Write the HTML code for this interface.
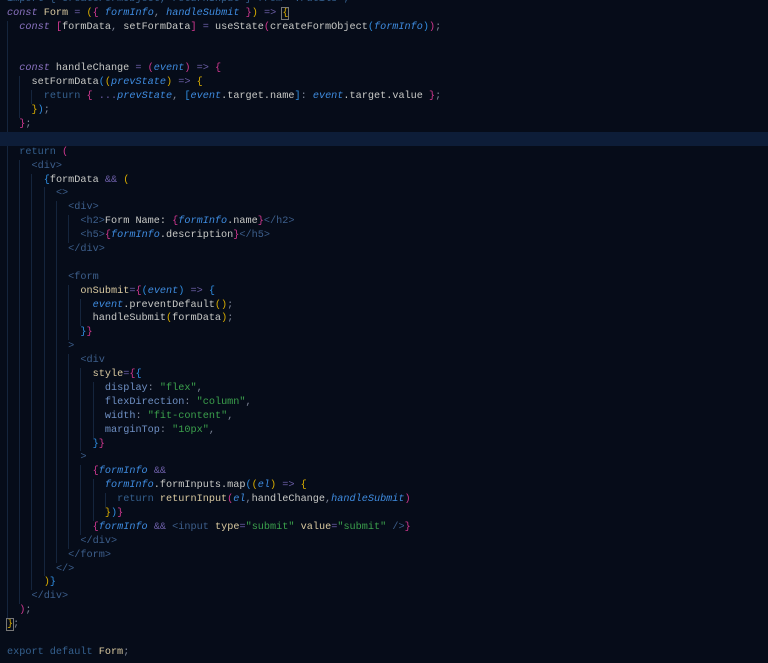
<!DOCTYPE html>
<html><head><meta charset="utf-8"><style>
html,body{margin:0;padding:0;background:#060c19;width:768px;height:663px;overflow:hidden}
#c{position:absolute;left:7px;top:-7px;font-family:"Liberation Mono","DejaVu Sans Mono",monospace;font-size:10.2px;color:#c8c9c6}
.l{height:13.9px;line-height:13.9px;position:relative;white-space:pre}
.hl{background:#0d1d38;margin-left:-7px;width:768px}
.g{display:inline-block;width:12.24px;height:13.9px;vertical-align:top;box-shadow:inset 1px 0 0 #15253d}
.k{color:#8a72c0;font-style:italic}
.r{color:#35608e}
.t{color:#3d5f8c}
.p{color:#3f8ce0;font-style:italic}
.s{color:#3ba04c}
.o{color:#6d5fa8}
.y{color:#d9ad00}
.m{color:#d03890}
.b{color:#2f8de0}
.pr{color:#6f90c4}
.u{color:#7d8596}
.f{color:#d9c9a0}
</style></head><body><div id="c">
<div class="l"><span class="r">import { createFormObject, returnInput } from "./utils";</span></div>
<div class="l"><span class="k">const</span> <span class="f">Form</span> <span class="o">=</span> <span class="y">(</span><span class="m">{</span> <span class="p">formInfo</span><span class="u">,</span> <span class="p">handleSubmit</span> <span class="m">}</span><span class="y">)</span> <span class="o">=&gt;</span> <span class="y" style="outline:1px solid #777">{</span></div>
<div class="l"><i class="g"></i><span class="k">const</span> <span class="m">[</span>formData<span class="u">,</span> setFormData<span class="m">]</span> <span class="o">=</span> useState<span class="m">(</span>createFormObject<span class="b">(</span><span class="p">formInfo</span><span class="b">)</span><span class="m">)</span><span class="u">;</span></div>
<div class="l"><i class="g"></i></div>
<div class="l"><i class="g"></i></div>
<div class="l"><i class="g"></i><span class="k">const</span> handleChange <span class="o">=</span> <span class="m">(</span><span class="p">event</span><span class="m">)</span> <span class="o">=&gt;</span> <span class="m">{</span></div>
<div class="l"><i class="g"></i><i class="g"></i>setFormData<span class="b">(</span><span class="y">(</span><span class="p">prevState</span><span class="y">)</span> <span class="o">=&gt;</span> <span class="y">{</span></div>
<div class="l"><i class="g"></i><i class="g"></i><i class="g"></i><span class="r">return</span> <span class="m">{</span> <span class="o">...</span><span class="p">prevState</span><span class="u">,</span> <span class="b">[</span><span class="p">event</span>.target.name<span class="b">]</span><span class="u">:</span> <span class="p">event</span>.target.value <span class="m">}</span><span class="u">;</span></div>
<div class="l"><i class="g"></i><i class="g"></i><span class="y">}</span><span class="b">)</span><span class="u">;</span></div>
<div class="l"><i class="g"></i><span class="m">}</span><span class="u">;</span></div>
<div class="l hl"></div>
<div class="l"><i class="g"></i><span class="r">return</span> <span class="m">(</span></div>
<div class="l"><i class="g"></i><i class="g"></i><span class="t">&lt;div&gt;</span></div>
<div class="l"><i class="g"></i><i class="g"></i><i class="g"></i><span class="b">{</span>formData <span class="o">&amp;&amp;</span> <span class="y">(</span></div>
<div class="l"><i class="g"></i><i class="g"></i><i class="g"></i><i class="g"></i><span class="t">&lt;&gt;</span></div>
<div class="l"><i class="g"></i><i class="g"></i><i class="g"></i><i class="g"></i><i class="g"></i><span class="t">&lt;div&gt;</span></div>
<div class="l"><i class="g"></i><i class="g"></i><i class="g"></i><i class="g"></i><i class="g"></i><i class="g"></i><span class="t">&lt;h2&gt;</span>Form Name: <span class="m">{</span><span class="p">formInfo</span>.name<span class="m">}</span><span class="t">&lt;/h2&gt;</span></div>
<div class="l"><i class="g"></i><i class="g"></i><i class="g"></i><i class="g"></i><i class="g"></i><i class="g"></i><span class="t">&lt;h5&gt;</span><span class="m">{</span><span class="p">formInfo</span>.description<span class="m">}</span><span class="t">&lt;/h5&gt;</span></div>
<div class="l"><i class="g"></i><i class="g"></i><i class="g"></i><i class="g"></i><i class="g"></i><span class="t">&lt;/div&gt;</span></div>
<div class="l"><i class="g"></i><i class="g"></i><i class="g"></i><i class="g"></i><i class="g"></i></div>
<div class="l"><i class="g"></i><i class="g"></i><i class="g"></i><i class="g"></i><i class="g"></i><span class="t">&lt;form</span></div>
<div class="l"><i class="g"></i><i class="g"></i><i class="g"></i><i class="g"></i><i class="g"></i><i class="g"></i><span class="f">onSubmit</span><span class="o">=</span><span class="m">{</span><span class="b">(</span><span class="p">event</span><span class="b">)</span> <span class="o">=&gt;</span> <span class="b">{</span></div>
<div class="l"><i class="g"></i><i class="g"></i><i class="g"></i><i class="g"></i><i class="g"></i><i class="g"></i><i class="g"></i><span class="p">event</span>.preventDefault<span class="y">()</span><span class="u">;</span></div>
<div class="l"><i class="g"></i><i class="g"></i><i class="g"></i><i class="g"></i><i class="g"></i><i class="g"></i><i class="g"></i>handleSubmit<span class="y">(</span>formData<span class="y">)</span><span class="u">;</span></div>
<div class="l"><i class="g"></i><i class="g"></i><i class="g"></i><i class="g"></i><i class="g"></i><i class="g"></i><span class="b">}</span><span class="m">}</span></div>
<div class="l"><i class="g"></i><i class="g"></i><i class="g"></i><i class="g"></i><i class="g"></i><span class="t">&gt;</span></div>
<div class="l"><i class="g"></i><i class="g"></i><i class="g"></i><i class="g"></i><i class="g"></i><i class="g"></i><span class="t">&lt;div</span></div>
<div class="l"><i class="g"></i><i class="g"></i><i class="g"></i><i class="g"></i><i class="g"></i><i class="g"></i><i class="g"></i><span class="f">style</span><span class="o">=</span><span class="m">{</span><span class="b">{</span></div>
<div class="l"><i class="g"></i><i class="g"></i><i class="g"></i><i class="g"></i><i class="g"></i><i class="g"></i><i class="g"></i><i class="g"></i><span class="pr">display</span><span class="u">:</span> <span class="s">"flex"</span><span class="u">,</span></div>
<div class="l"><i class="g"></i><i class="g"></i><i class="g"></i><i class="g"></i><i class="g"></i><i class="g"></i><i class="g"></i><i class="g"></i><span class="pr">flexDirection</span><span class="u">:</span> <span class="s">"column"</span><span class="u">,</span></div>
<div class="l"><i class="g"></i><i class="g"></i><i class="g"></i><i class="g"></i><i class="g"></i><i class="g"></i><i class="g"></i><i class="g"></i><span class="pr">width</span><span class="u">:</span> <span class="s">"fit-content"</span><span class="u">,</span></div>
<div class="l"><i class="g"></i><i class="g"></i><i class="g"></i><i class="g"></i><i class="g"></i><i class="g"></i><i class="g"></i><i class="g"></i><span class="pr">marginTop</span><span class="u">:</span> <span class="s">"10px"</span><span class="u">,</span></div>
<div class="l"><i class="g"></i><i class="g"></i><i class="g"></i><i class="g"></i><i class="g"></i><i class="g"></i><i class="g"></i><span class="b">}</span><span class="m">}</span></div>
<div class="l"><i class="g"></i><i class="g"></i><i class="g"></i><i class="g"></i><i class="g"></i><i class="g"></i><span class="t">&gt;</span></div>
<div class="l"><i class="g"></i><i class="g"></i><i class="g"></i><i class="g"></i><i class="g"></i><i class="g"></i><i class="g"></i><span class="m">{</span><span class="p">formInfo</span> <span class="o">&amp;&amp;</span></div>
<div class="l"><i class="g"></i><i class="g"></i><i class="g"></i><i class="g"></i><i class="g"></i><i class="g"></i><i class="g"></i><i class="g"></i><span class="p">formInfo</span>.formInputs.map<span class="b">(</span><span class="y">(</span><span class="p">el</span><span class="y">)</span> <span class="o">=&gt;</span> <span class="y">{</span></div>
<div class="l"><i class="g"></i><i class="g"></i><i class="g"></i><i class="g"></i><i class="g"></i><i class="g"></i><i class="g"></i><i class="g"></i><i class="g"></i><span class="r">return</span> <span class="f">returnInput</span><span class="m">(</span><span class="p">el</span><span class="u">,</span>handleChange<span class="u">,</span><span class="p">handleSubmit</span><span class="m">)</span></div>
<div class="l"><i class="g"></i><i class="g"></i><i class="g"></i><i class="g"></i><i class="g"></i><i class="g"></i><i class="g"></i><i class="g"></i><span class="y">}</span><span class="b">)</span><span class="m">}</span></div>
<div class="l"><i class="g"></i><i class="g"></i><i class="g"></i><i class="g"></i><i class="g"></i><i class="g"></i><i class="g"></i><span class="m">{</span><span class="p">formInfo</span> <span class="o">&amp;&amp;</span> <span class="t">&lt;input</span> <span class="f">type</span><span class="o">=</span><span class="s">"submit"</span> <span class="f">value</span><span class="o">=</span><span class="s">"submit"</span> <span class="t">/&gt;</span><span class="m">}</span></div>
<div class="l"><i class="g"></i><i class="g"></i><i class="g"></i><i class="g"></i><i class="g"></i><i class="g"></i><span class="t">&lt;/div&gt;</span></div>
<div class="l"><i class="g"></i><i class="g"></i><i class="g"></i><i class="g"></i><i class="g"></i><span class="t">&lt;/form&gt;</span></div>
<div class="l"><i class="g"></i><i class="g"></i><i class="g"></i><i class="g"></i><span class="t">&lt;/&gt;</span></div>
<div class="l"><i class="g"></i><i class="g"></i><i class="g"></i><span class="y">)</span><span class="b">}</span></div>
<div class="l"><i class="g"></i><i class="g"></i><span class="t">&lt;/div&gt;</span></div>
<div class="l"><i class="g"></i><span class="m">)</span><span class="u">;</span></div>
<div class="l"><span class="y" style="outline:1px solid #777">}</span><span class="u">;</span></div>
<div class="l"></div>
<div class="l"><span class="r">export default</span> <span class="f">Form</span><span class="u">;</span></div>
</div></body></html>
